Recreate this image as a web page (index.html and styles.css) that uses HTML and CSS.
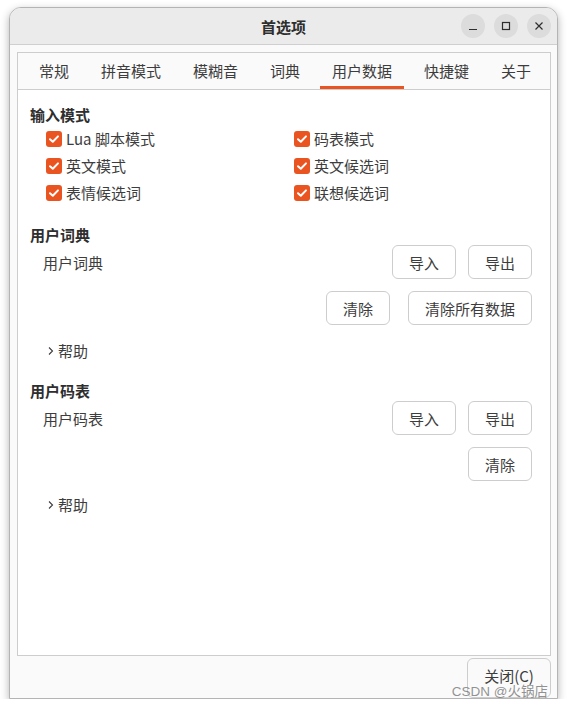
FILE: index.html
```html
<!DOCTYPE html>
<html lang="zh-CN">
<head>
    <meta charset="UTF-8">
    <meta name="viewport" content="width=device-width, initial-scale=1.0">
    <title>首选项</title>
    <link rel="stylesheet" href="styles.css">
</head>
<body>
    <div class="window">
        <!-- Title bar -->
        <header class="titlebar">
            <span></span>
            <span class="title">首选项</span>
            <div class="controls">
                <button class="ctl" title="最小化">
                    <svg width="10" height="10" viewBox="0 0 10 10"><path d="M1 8.5h8" stroke="#2e2e2e" stroke-width="1.2"/></svg>
                </button>
                <button class="ctl" title="最大化">
                    <svg width="10" height="10" viewBox="0 0 10 10"><rect x="1.5" y="1.5" width="7" height="7" fill="none" stroke="#2e2e2e" stroke-width="1.2"/></svg>
                </button>
                <button class="ctl" title="关闭">
                    <svg width="10" height="10" viewBox="0 0 10 10"><path d="M1.5 1.5l7 7M8.5 1.5l-7 7" stroke="#2e2e2e" stroke-width="1.2"/></svg>
                </button>
            </div>
        </header>

        <!-- Notebook with tabs -->
        <main class="notebook">
            <nav class="tabs">
                <span class="tab">常规</span>
                <span class="tab">拼音模式</span>
                <span class="tab">模糊音</span>
                <span class="tab">词典</span>
                <span class="tab active">用户数据</span>
                <span class="tab">快捷键</span>
                <span class="tab">关于</span>
            </nav>

            <div class="page">
                <h3 class="group-title">输入模式</h3>
                <div class="checks">
                    <label class="check"><svg class="box" viewBox="0 0 16 16"><rect width="16" height="16" rx="3" fill="#e95420"/><path d="M4 8.2l2.8 2.6L12 5.4" fill="none" stroke="#fff" stroke-width="2" stroke-linecap="round" stroke-linejoin="round"/></svg>Lua 脚本模式</label>
                    <label class="check"><svg class="box" viewBox="0 0 16 16"><rect width="16" height="16" rx="3" fill="#e95420"/><path d="M4 8.2l2.8 2.6L12 5.4" fill="none" stroke="#fff" stroke-width="2" stroke-linecap="round" stroke-linejoin="round"/></svg>码表模式</label>
                    <label class="check"><svg class="box" viewBox="0 0 16 16"><rect width="16" height="16" rx="3" fill="#e95420"/><path d="M4 8.2l2.8 2.6L12 5.4" fill="none" stroke="#fff" stroke-width="2" stroke-linecap="round" stroke-linejoin="round"/></svg>英文模式</label>
                    <label class="check"><svg class="box" viewBox="0 0 16 16"><rect width="16" height="16" rx="3" fill="#e95420"/><path d="M4 8.2l2.8 2.6L12 5.4" fill="none" stroke="#fff" stroke-width="2" stroke-linecap="round" stroke-linejoin="round"/></svg>英文候选词</label>
                    <label class="check"><svg class="box" viewBox="0 0 16 16"><rect width="16" height="16" rx="3" fill="#e95420"/><path d="M4 8.2l2.8 2.6L12 5.4" fill="none" stroke="#fff" stroke-width="2" stroke-linecap="round" stroke-linejoin="round"/></svg>表情候选词</label>
                    <label class="check"><svg class="box" viewBox="0 0 16 16"><rect width="16" height="16" rx="3" fill="#e95420"/><path d="M4 8.2l2.8 2.6L12 5.4" fill="none" stroke="#fff" stroke-width="2" stroke-linecap="round" stroke-linejoin="round"/></svg>联想候选词</label>
                </div>

                <!-- User dictionary -->
                <h3 class="group-title spaced">用户词典</h3>
                <div class="data-row">
                    <span class="row-label">用户词典</span>
                    <div class="btns">
                        <button class="btn">导入</button>
                        <button class="btn">导出</button>
                    </div>
                </div>
                <div class="data-row second">
                    <div class="btns">
                        <button class="btn">清除</button>
                        <button class="btn far">清除所有数据</button>
                    </div>
                </div>
                <div class="help">
                    <svg width="6" height="10" viewBox="0 0 6 10"><path d="M1 1.5L4.5 5 1 8.5" fill="none" stroke="#3d3d3d" stroke-width="1.1"/></svg>
                    帮助
                </div>

                <!-- User code table -->
                <h3 class="group-title after-help">用户码表</h3>
                <div class="data-row">
                    <span class="row-label">用户码表</span>
                    <div class="btns">
                        <button class="btn">导入</button>
                        <button class="btn">导出</button>
                    </div>
                </div>
                <div class="data-row second">
                    <div class="btns">
                        <button class="btn">清除</button>
                    </div>
                </div>
                <div class="help tight">
                    <svg width="6" height="10" viewBox="0 0 6 10"><path d="M1 1.5L4.5 5 1 8.5" fill="none" stroke="#3d3d3d" stroke-width="1.1"/></svg>
                    帮助
                </div>
            </div>
        </main>

        <footer class="actions">
            <button class="btn close">关闭(C)</button>
        </footer>

        <span class="watermark">CSDN @火锅店</span>
    </div>
</body>
</html>
```

FILE: styles.css
```css
* {
    box-sizing: border-box;
    margin: 0;
    padding: 0;
    font-family: "Noto Sans CJK SC", "Noto Sans", sans-serif;
}

body {
    background: #ffffff;
    padding: 7px 0 0 9px;
    color: #3d3d3d;
    font-size: 15px;
}

.window {
    position: relative;
    width: 549px;
    height: 692px;
    background: #fafafa;
    border: 1px solid #b4b4b4;
    border-radius: 12px 12px 0 0;
    box-shadow: 0 3px 9px rgba(0,0,0,0.3);
    overflow: hidden;
}

/* title bar */
.titlebar {
    display: grid;
    grid-template-columns: 1fr auto 1fr;
    align-items: center;
    height: 37px;
    background: #ebebeb;
    border-bottom: 1px solid #cfcfcf;
}

.title {
    font-weight: bold;
    font-size: 15px;
    color: #2e2e2e;
    padding-top: 1px;
}

.controls {
    display: flex;
    justify-content: flex-end;
    gap: 9px;
    padding-right: 6px;
}

.ctl {
    width: 24px;
    height: 24px;
    border: none;
    border-radius: 50%;
    background: #dcdcdc;
    display: flex;
    align-items: center;
    justify-content: center;
}

/* notebook */
.notebook {
    margin: 7px 6px 0 7px;
    height: 604px;
    border: 1px solid #cdcdcd;
    background: #ffffff;
}

.tabs {
    display: flex;
    height: 37px;
    padding-left: 5px;
    background: #fafafa;
    border-bottom: 1px solid #cdcdcd;
}

.tab {
    margin: 0 4px;
    padding: 3px 12px 0;
    line-height: 30px;
    height: 36px;
    border-bottom: 3px solid transparent;
    color: #3d3d3d;
    white-space: nowrap;
}

.tab.active {
    border-bottom-color: #e95420;
}

.page {
    padding: 15px 18px 0 12px;
}

.group-title {
    font-size: 15px;
    font-weight: bold;
    line-height: 20px;
    color: #2e2e2e;
}

.group-title.spaced {
    margin-top: 19px;
}

.group-title.after-help {
    margin-top: 20px;
}

.checks {
    display: grid;
    grid-template-columns: 248px 248px;
    grid-auto-rows: 27px;
    margin-left: 16px;
}

.check {
    display: flex;
    align-items: center;
    gap: 4px;
    white-space: nowrap;
}

.check .box {
    width: 16px;
    height: 16px;
    flex: 0 0 16px;
}

.data-row {
    display: flex;
    align-items: center;
    height: 34px;
    padding-left: 13px;
}

.data-row.second {
    margin-top: 12px;
}

.row-label {
    flex: 1;
}

.btns {
    display: flex;
    gap: 12px;
    margin-left: auto;
}

.btn {
    height: 34px;
    padding: 0 16px;
    border: 1px solid #cdcdcd;
    border-radius: 6px;
    background: #ffffff;
    color: #3d3d3d;
    font-size: 15px;
}

.btn.far {
    margin-left: 6px;
}

.help {
    display: flex;
    align-items: center;
    gap: 4px;
    margin-top: 16px;
    padding-left: 18px;
    line-height: 20px;
}

.help.tight {
    margin-top: 14px;
}

.actions {
    display: flex;
    justify-content: flex-end;
    padding: 2px 6px 0;
}

.btn.close {
    height: 40px;
    width: 84px;
    padding: 0 0 6px;
    background: #fafafa;
}

.watermark {
    position: absolute;
    right: 9px;
    bottom: -2px;
    font-family: "Liberation Sans", "Noto Sans CJK SC", sans-serif;
    font-size: 13.5px;
    color: rgba(110,110,110,0.75);
}
```
